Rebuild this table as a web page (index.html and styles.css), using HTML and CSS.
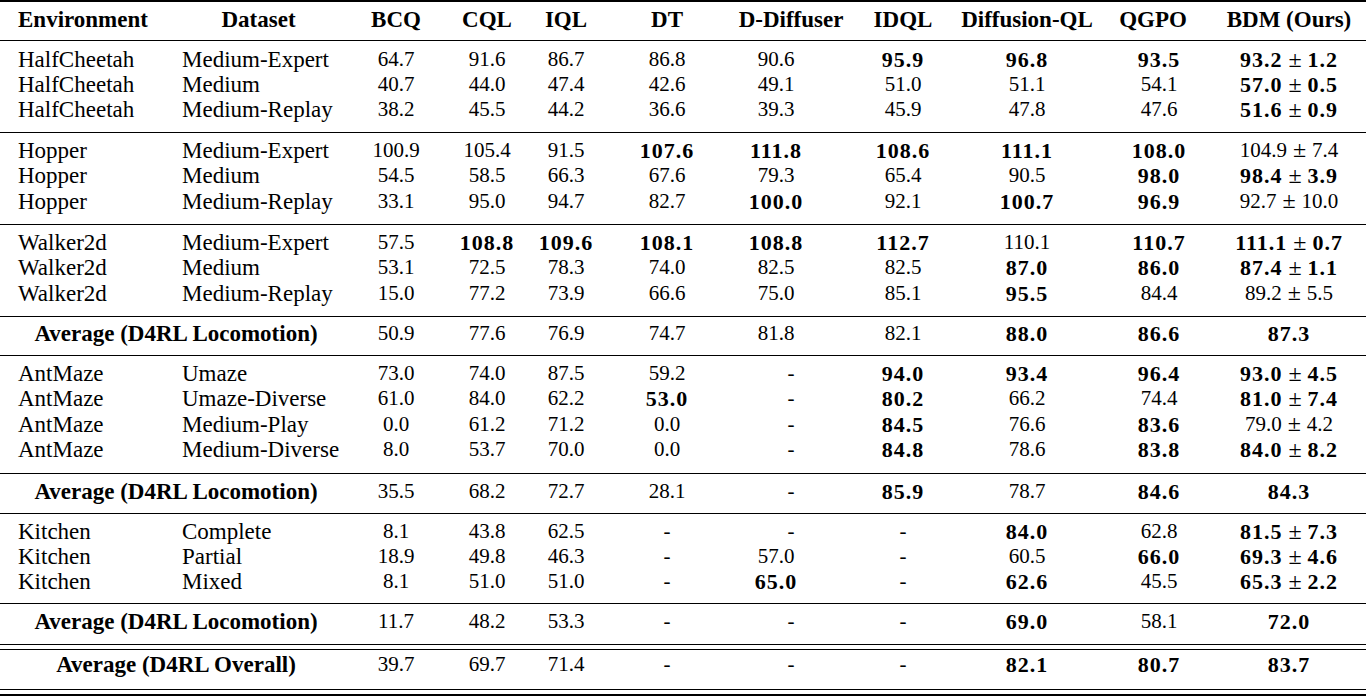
FILE: index.html
```html
<!DOCTYPE html>
<html>
<head>
<meta charset="utf-8">
<link rel="stylesheet" href="styles.css">
</head>
<body>
<table class="results">
  <colgroup>
    <col class="c-env"><col class="c-ds"><col class="c-bcq"><col class="c-cql"><col class="c-iql"><col class="c-dt"><col class="c-dd"><col class="c-idql"><col class="c-dql"><col class="c-qgpo"><col class="c-bdm">
  </colgroup>
  <thead>
    <tr>
      <th class="env">Environment</th><th>Dataset</th><th>BCQ</th><th>CQL</th><th>IQL</th><th>DT</th><th>D-Diffuser</th><th>IDQL</th><th>Diffusion-QL</th><th>QGPO</th><th>BDM (Ours)</th>
    </tr>
  </thead>
  <tbody class="hc">
    <tr><td class="env">HalfCheetah</td><td class="ds">Medium-Expert</td><td>64.7</td><td>91.6</td><td>86.7</td><td>86.8</td><td class="dd">90.6</td><td class="b">95.9</td><td class="b">96.8</td><td class="b qg">93.5</td><td class="b">93.2<span class="pm">±</span>1.2</td></tr>
    <tr><td class="env">HalfCheetah</td><td class="ds">Medium</td><td>40.7</td><td>44.0</td><td>47.4</td><td>42.6</td><td class="dd">49.1</td><td>51.0</td><td>51.1</td><td class="qg">54.1</td><td class="b">57.0<span class="pm">±</span>0.5</td></tr>
    <tr><td class="env">HalfCheetah</td><td class="ds">Medium-Replay</td><td>38.2</td><td>45.5</td><td>44.2</td><td>36.6</td><td class="dd">39.3</td><td>45.9</td><td>47.8</td><td class="qg">47.6</td><td class="b">51.6<span class="pm">±</span>0.9</td></tr>
  </tbody>
  <tbody class="hop">
    <tr><td class="env">Hopper</td><td class="ds">Medium-Expert</td><td>100.9</td><td>105.4</td><td>91.5</td><td class="b">107.6</td><td class="b dd">111.8</td><td class="b">108.6</td><td class="b">111.1</td><td class="b qg">108.0</td><td>104.9<span class="pm">±</span>7.4</td></tr>
    <tr><td class="env">Hopper</td><td class="ds">Medium</td><td>54.5</td><td>58.5</td><td>66.3</td><td>67.6</td><td class="dd">79.3</td><td>65.4</td><td>90.5</td><td class="b qg">98.0</td><td class="b">98.4<span class="pm">±</span>3.9</td></tr>
    <tr><td class="env">Hopper</td><td class="ds">Medium-Replay</td><td>33.1</td><td>95.0</td><td>94.7</td><td>82.7</td><td class="b dd">100.0</td><td>92.1</td><td class="b">100.7</td><td class="b qg">96.9</td><td>92.7<span class="pm">±</span>10.0</td></tr>
  </tbody>
  <tbody class="wk">
    <tr><td class="env">Walker2d</td><td class="ds">Medium-Expert</td><td>57.5</td><td class="b">108.8</td><td class="b">109.6</td><td class="b">108.1</td><td class="b dd">108.8</td><td class="b">112.7</td><td>110.1</td><td class="b qg">110.7</td><td class="b">111.1<span class="pm">±</span>0.7</td></tr>
    <tr><td class="env">Walker2d</td><td class="ds">Medium</td><td>53.1</td><td>72.5</td><td>78.3</td><td>74.0</td><td class="dd">82.5</td><td>82.5</td><td class="b">87.0</td><td class="b qg">86.0</td><td class="b">87.4<span class="pm">±</span>1.1</td></tr>
    <tr><td class="env">Walker2d</td><td class="ds">Medium-Replay</td><td>15.0</td><td>77.2</td><td>73.9</td><td>66.6</td><td class="dd">75.0</td><td>85.1</td><td class="b">95.5</td><td class="qg">84.4</td><td>89.2<span class="pm">±</span>5.5</td></tr>
  </tbody>
  <tbody class="avg1">
    <tr><td class="avg-label" colspan="2">Average (D4RL Locomotion)</td><td>50.9</td><td>77.6</td><td>76.9</td><td>74.7</td><td class="dd">81.8</td><td>82.1</td><td class="b">88.0</td><td class="b qg">86.6</td><td class="b">87.3</td></tr>
  </tbody>
  <tbody class="ant">
    <tr><td class="env">AntMaze</td><td class="ds">Umaze</td><td>73.0</td><td>74.0</td><td>87.5</td><td>59.2</td><td>-</td><td class="b">94.0</td><td class="b">93.4</td><td class="b qg">96.4</td><td class="b">93.0<span class="pm">±</span>4.5</td></tr>
    <tr><td class="env">AntMaze</td><td class="ds">Umaze-Diverse</td><td>61.0</td><td>84.0</td><td>62.2</td><td class="b">53.0</td><td>-</td><td class="b">80.2</td><td>66.2</td><td class="qg">74.4</td><td class="b">81.0<span class="pm">±</span>7.4</td></tr>
    <tr><td class="env">AntMaze</td><td class="ds">Medium-Play</td><td>0.0</td><td>61.2</td><td>71.2</td><td>0.0</td><td>-</td><td class="b">84.5</td><td>76.6</td><td class="b qg">83.6</td><td>79.0<span class="pm">±</span>4.2</td></tr>
    <tr><td class="env">AntMaze</td><td class="ds">Medium-Diverse</td><td>8.0</td><td>53.7</td><td>70.0</td><td>0.0</td><td>-</td><td class="b">84.8</td><td>78.6</td><td class="b qg">83.8</td><td class="b">84.0<span class="pm">±</span>8.2</td></tr>
  </tbody>
  <tbody class="avg2">
    <tr><td class="avg-label" colspan="2">Average (D4RL Locomotion)</td><td>35.5</td><td>68.2</td><td>72.7</td><td>28.1</td><td>-</td><td class="b">85.9</td><td>78.7</td><td class="b qg">84.6</td><td class="b">84.3</td></tr>
  </tbody>
  <tbody class="kit">
    <tr><td class="env">Kitchen</td><td class="ds">Complete</td><td>8.1</td><td>43.8</td><td>62.5</td><td>-</td><td>-</td><td>-</td><td class="b">84.0</td><td class="qg">62.8</td><td class="b">81.5<span class="pm">±</span>7.3</td></tr>
    <tr><td class="env">Kitchen</td><td class="ds">Partial</td><td>18.9</td><td>49.8</td><td>46.3</td><td>-</td><td class="dd">57.0</td><td>-</td><td>60.5</td><td class="b qg">66.0</td><td class="b">69.3<span class="pm">±</span>4.6</td></tr>
    <tr><td class="env">Kitchen</td><td class="ds">Mixed</td><td>8.1</td><td>51.0</td><td>51.0</td><td>-</td><td class="b dd">65.0</td><td>-</td><td class="b">62.6</td><td class="qg">45.5</td><td class="b">65.3<span class="pm">±</span>2.2</td></tr>
  </tbody>
  <tbody class="avg3">
    <tr><td class="avg-label" colspan="2">Average (D4RL Locomotion)</td><td>11.7</td><td>48.2</td><td>53.3</td><td>-</td><td>-</td><td>-</td><td class="b">69.0</td><td class="qg">58.1</td><td class="b">72.0</td></tr>
  </tbody>
  <tbody class="overall">
    <tr><td class="avg-label" colspan="2">Average (D4RL Overall)</td><td>39.7</td><td>69.7</td><td>71.4</td><td>-</td><td>-</td><td>-</td><td class="b">82.1</td><td class="b qg">80.7</td><td class="b">83.7</td></tr>
  </tbody>
</table>
</body>
</html>
```

FILE: styles.css
```css
html, body {
  margin: 0;
  padding: 0;
  background: #fff;
}

.results {
  table-layout: fixed;
  width: 1366px;
  border-collapse: separate;
  border-spacing: 0;
  font-family: "Liberation Serif", "Times New Roman", serif;
  color: #000;
}

.c-env { width: 165px; }
.c-ds { width: 187px; }
.c-bcq { width: 88px; }
.c-cql { width: 94px; }
.c-iql { width: 64px; }
.c-dt { width: 138px; }
.c-dd { width: 110px; }
.c-idql { width: 114px; }
.c-dql { width: 134px; }
.c-qgpo { width: 118px; }
.c-bdm { width: 154px; }

th, td {
  padding: 0;
  line-height: 25px;
  text-align: center;
  white-space: nowrap;
  font-size: 21px;
  font-weight: normal;
}

thead th {
  font-size: 23px;
  font-weight: bold;
  border-top: 2px solid #000;
  padding: 5px 0 8px;
}

thead th.env {
  text-align: left;
  padding-left: 18px;
}

td.env, td.ds {
  text-align: left;
  font-size: 23px;
}

td.env { padding-left: 18px; }
td.ds { padding-left: 17px; }

td.avg-label {
  font-size: 23px;
  font-weight: bold;
}

td.b {
  font-weight: bold;
  font-size: 22px;
  letter-spacing: 1px;
}

td.dd { padding-right: 30px; }
td.qg { padding-left: 12px; }

.pm {
  font-weight: normal;
  font-size: 24px;
  letter-spacing: 0;
  margin: 0 6px 0 6px;
}

/* group rules and spacing */
tbody tr:first-child td {
  border-top: 1px solid #000;
  padding-top: 5px;
}

tbody tr:last-child td {
  padding-bottom: 10px;
}

tbody.hc tr:first-child td { padding-top: 6px; }
tbody.hop tr:first-child td { padding-top: 4px; }
tbody.avg1 tr:first-child td { padding-top: 4px; }
tbody.avg1 tr:last-child td { padding-bottom: 9px; }
tbody.ant tr:last-child td { padding-bottom: 11px; }
tbody.avg2 tr:last-child td { padding-bottom: 9px; }
tbody.kit tr:last-child td { padding-bottom: 9px; }
tbody.avg3 tr:last-child td { padding-bottom: 10px; }

tbody.overall tr td {
  padding-top: 7px;
  padding-bottom: 17px;
  border-bottom: 2px solid #000;
  box-shadow:
    inset 0 4px 0 #fff,
    inset 0 -4px 0 #fff,
    inset 0 5px 0 #000,
    inset 0 -5px 0 #000;
}
```
